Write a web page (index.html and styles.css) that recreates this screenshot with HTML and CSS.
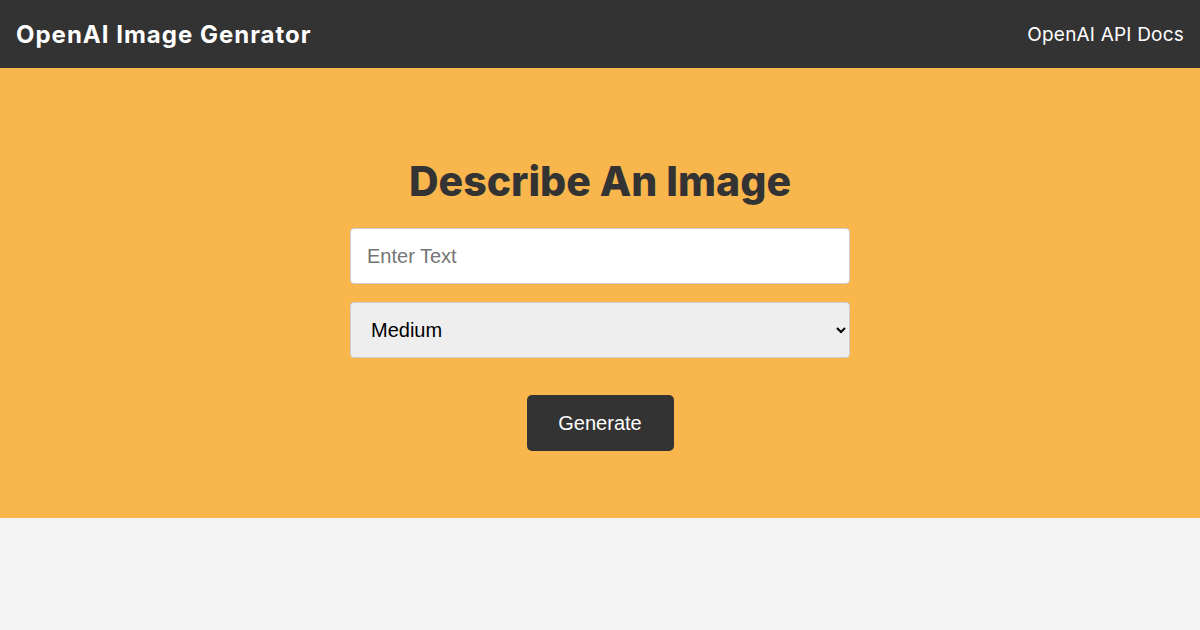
FILE: index.html
```html
<!DOCTYPE html>
<html lang="en">
<head>
<meta charset="UTF-8">
<title>OpenAI Image Genrator</title>
<link rel="stylesheet" href="styles.css">
</head>
<body>
  <header class="navbar">
    <div class="logo">OpenAI Image Genrator</div>
    <nav class="nav-links"><a href="#">OpenAI API Docs</a></nav>
  </header>
  <main>
    <section class="showcase">
      <form class="image-form">
        <h1>Describe An Image</h1>
        <input type="text" class="prompt" placeholder="Enter Text">
        <select class="size">
          <option value="small">Small</option>
          <option value="medium" selected>Medium</option>
          <option value="large">Large</option>
        </select>
        <button type="submit" class="btn">Generate</button>
      </form>
    </section>
  </main>
</body>
</html>
```

FILE: styles.css
```css
* { box-sizing: border-box; margin: 0; padding: 0; }
body {
  background: #f4f4f4;
  font-family: "Inter", "Liberation Sans", sans-serif;
  color: #333;
}
.navbar {
  height: 68px;
  background: #333;
  color: #fff;
  display: flex;
  align-items: center;
  justify-content: space-between;
  padding: 0 16px;
}
.logo {
  font-size: 24px;
  font-weight: 700;
  letter-spacing: 1px;
}
.nav-links a {
  color: #fff;
  text-decoration: none;
  font-size: 19px;
  letter-spacing: 0.2px;
}
.showcase {
  background: #f9b64c;
  height: 450px;
  padding-top: 88px;
}
.image-form {
  width: 500px;
  margin: 0 auto;
  display: flex;
  flex-direction: column;
  align-items: center;
}
.image-form h1 {
  font-size: 41px;
  font-weight: 800;
  line-height: 50px;
  color: #333;
  margin-bottom: 22px;
}
.prompt, .size {
  width: 500px;
  height: 56px;
  border: 1px solid #ccc;
  border-radius: 4px;
  font-family: "Liberation Sans", Arial, sans-serif;
  font-size: 20px;
}
.prompt {
  background: #fff;
  padding: 0 16px;
  color: #333;
  margin-bottom: 18px;
}
.prompt::placeholder { color: #757575; }
.size {
  background: #eee;
  padding: 0 16px;
  color: #000;
  margin-bottom: 37px;
}
.btn {
  width: 147px;
  height: 56px;
  background: #333;
  color: #fff;
  border: none;
  border-radius: 5px;
  font-family: "Liberation Sans", Arial, sans-serif;
  font-size: 20px;
}
```
